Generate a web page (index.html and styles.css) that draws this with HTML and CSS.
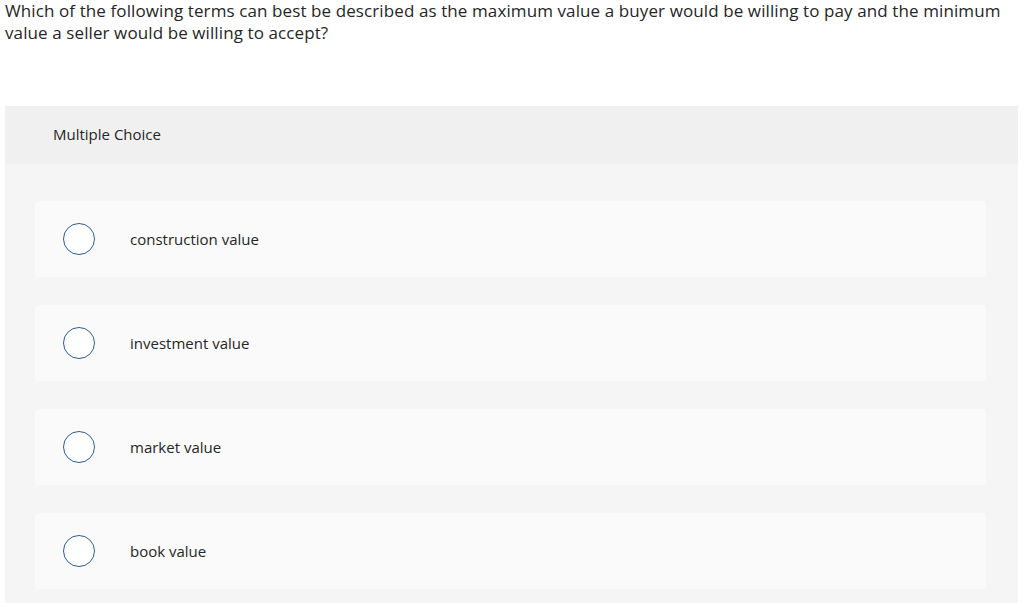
FILE: index.html
```html
<!DOCTYPE html>
<html>
<head>
<meta charset="utf-8">
<link rel="stylesheet" href="styles.css">
</head>
<body>
<div class="page">
  <p class="question">Which of the following terms can best be described as the maximum value a buyer would be willing to pay and the minimum value a seller would be willing to accept?</p>
  <section class="panel">
    <div class="panel-head">Multiple Choice</div>
    <div class="panel-body">
      <div class="option"><span class="radio"></span><span class="label">construction value</span></div>
      <div class="option"><span class="radio"></span><span class="label">investment value</span></div>
      <div class="option"><span class="radio"></span><span class="label">market value</span></div>
      <div class="option"><span class="radio"></span><span class="label">book value</span></div>
    </div>
  </section>
</div>
</body>
</html>
```

FILE: styles.css
```css
html, body {
  margin: 0;
  padding: 0;
  background: #ffffff;
}
body {
  font-family: "Open Sans", "Liberation Sans", sans-serif;
  color: #262626;
}
.page {
  padding: 0 6px 0 5px;
}
.question {
  margin: 0;
  font-size: 17px;
  line-height: 22px;
  letter-spacing: 0.1px;
}
.panel {
  margin-top: 62px;
}
.panel-head {
  background: #f0f0f0;
  height: 58px;
  display: flex;
  align-items: center;
  padding-left: 48px;
  padding-bottom: 3px;
  box-sizing: border-box;
  font-size: 15px;
}
.panel-body {
  background: #f5f5f5;
  padding: 37px 32px 20px 30px;
  display: flex;
  flex-direction: column;
  gap: 28px;
}
.option {
  background: #fafafa;
  border-radius: 4px;
  height: 76px;
  display: flex;
  align-items: center;
  padding-left: 28px;
}
.radio {
  width: 30px;
  height: 30px;
  border: 1.5px solid #2c5d98;
  border-radius: 50%;
  background: #fff;
  flex: none;
}
.label {
  margin-left: 35px;
  font-size: 15px;
  padding-bottom: 1px;
}
```
